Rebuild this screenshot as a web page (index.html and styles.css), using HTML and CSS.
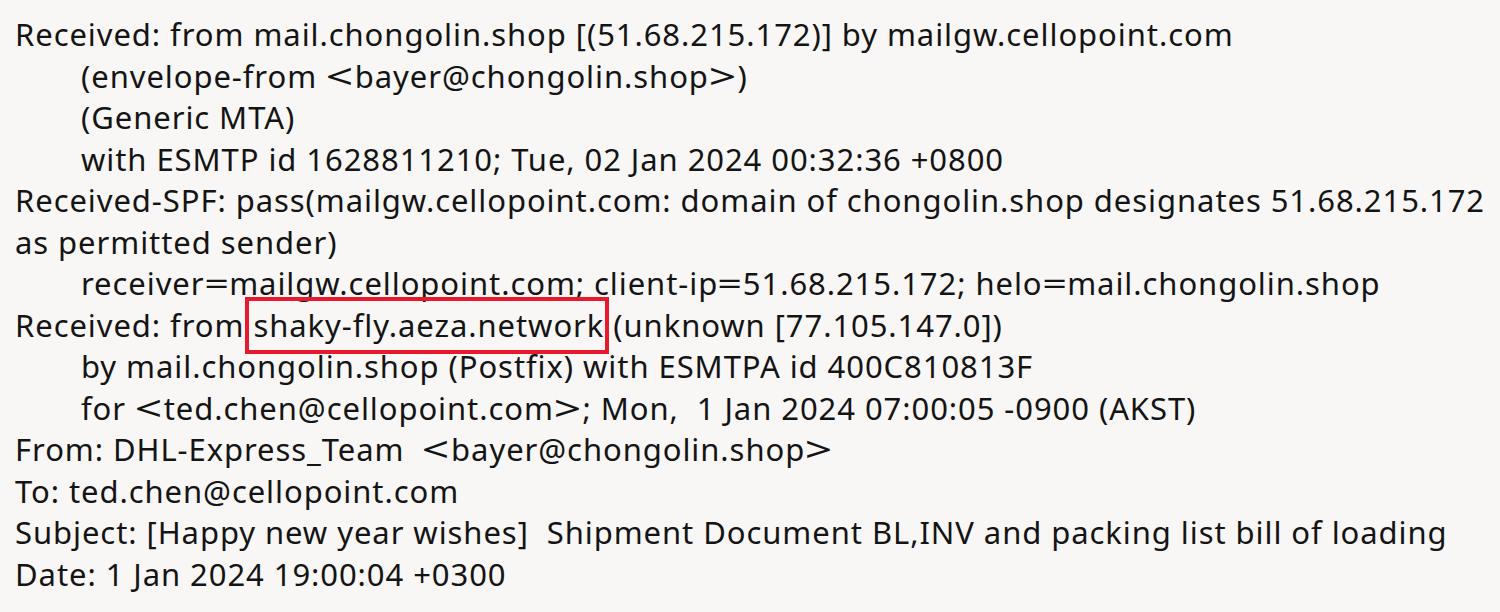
FILE: index.html
```html
<!DOCTYPE html>
<html>
<head>
<meta charset="utf-8">
<link rel="stylesheet" href="styles.css">
</head>
<body>
<div class="headers">
  <div class="line">Received: from mail.chongolin.shop [(51.68.215.172)] by mailgw.cellopoint.com</div>
  <div class="line indent">(envelope-from <span class="sym">&lt;</span>bayer@chongolin.shop<span class="sym">&gt;</span>)</div>
  <div class="line indent">(Generic MTA)</div>
  <div class="line indent">with ESMTP id 1628811210; Tue, 02 Jan 2024 00:32:36 +0800</div>
  <div class="line">Received-SPF: pass(mailgw.cellopoint.com: domain of chongolin.shop designates 51.68.215.172</div>
  <div class="line">as permitted sender)</div>
  <div class="line indent">receiver<span class="eq">=</span>mailgw.cellopoint.com; client-ip<span class="eq">=</span>51.68.215.172; helo<span class="eq">=</span>mail.chongolin.shop</div>
  <div class="line">Received: from <span class="mark">shaky-fly.aeza.network</span> (unknown [77.105.147.0])</div>
  <div class="line indent">by mail.chongolin.shop (Postfix) with ESMTPA id 400C810813F</div>
  <div class="line indent">for <span class="sym">&lt;</span>ted.chen@cellopoint.com<span class="sym">&gt;</span>; Mon,  1 Jan 2024 07:00:05 -0900 (AKST)</div>
  <div class="line">From: DHL-Express_Team  <span class="sym">&lt;</span>bayer@chongolin.shop<span class="sym">&gt;</span></div>
  <div class="line">To: ted.chen@cellopoint.com</div>
  <div class="line">Subject: [Happy new year wishes]  Shipment Document BL,INV and packing list bill of loading</div>
  <div class="line">Date: 1 Jan 2024 19:00:04 +0300</div>
</div>
</body>
</html>
```
FILE: styles.css
```css
html, body {
  margin: 0;
  padding: 0;
  background: #f8f7f6;
}
.headers {
  padding: 14px 0 0 15px;
  font-family: "Noto Sans", "Open Sans", sans-serif;
  font-size: 31px;
  letter-spacing: 0.93px;
  line-height: 41.5px;
  color: #141414;
}
.line {
  white-space: pre;
}
.indent {
  padding-left: 66px;
}
.sym {
  display: inline-block;
  margin: 0 5px;
  transform: scale(1.55, 1.1);
}
.eq {
  display: inline-block;
  margin: 0 3px;
  transform: scaleX(1.4);
}
.mark {
  position: relative;
}
.mark::after {
  content: "";
  position: absolute;
  left: -8px;
  right: -5px;
  top: -7px;
  bottom: -8px;
  border: 4px solid #e8192c;
}
```
